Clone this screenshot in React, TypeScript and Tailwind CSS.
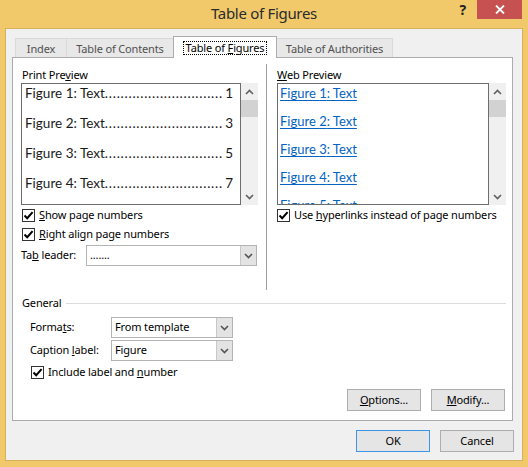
import { ReactNode } from 'react';

// Word "Table of Figures" dialog, Windows 8 chrome
function Check() {
  return (
    <div className="flex size-[13px] shrink-0 items-center justify-center border border-[#333333] bg-white">
      <svg width="11" height="11" viewBox="0 0 11 11">
        <path d="M1.5 5.5 L4.2 8.2 L9.6 2.2" fill="none" stroke="#000" strokeWidth="2" />
      </svg>
    </div>
  );
}

function Chevron({ up = false, color = '#606060' }: { up?: boolean; color?: string }) {
  return (
    <svg width="9" height="6" viewBox="0 0 9 6">
      <path
        d={up ? 'M1 5 L4.5 1.5 L8 5' : 'M1 1 L4.5 4.5 L8 1'}
        fill="none"
        stroke={color}
        strokeWidth="1.6"
      />
    </svg>
  );
}

function ScrollBar() {
  return (
    <div className="flex h-full w-[17px] flex-col bg-[#f0f0f0]">
      <div className="flex h-[17px] items-center justify-center">
        <Chevron up />
      </div>
      <div className="h-[17px] w-full bg-[#d2d2d2]" />
      <div className="flex-1" />
      <div className="flex h-[17px] items-center justify-center">
        <Chevron />
      </div>
    </div>
  );
}

function Combo({ value, width }: { value: string; width: string }) {
  return (
    <div className={`flex h-[21px] border border-[#b4b4b4] bg-white ${width}`}>
      <div className="flex flex-1 items-center pl-[3px]">{value}</div>
      <div className="flex w-[16px] items-center justify-center border-l border-[#c8c8c8] bg-[#e3e3e3]">
        <Chevron color="#555" />
      </div>
    </div>
  );
}

function Btn({ children, def = false }: { children: ReactNode; def?: boolean }) {
  return (
    <div
      className={`flex h-[22px] w-[74px] items-center justify-center border bg-[#e5e5e5] ${
        def ? 'border-[#3c95e6]' : 'border-[#adadad]'
      }`}
    >
      {children}
    </div>
  );
}

function CheckRow({ children }: { children: ReactNode }) {
  return (
    <div className="flex h-[17px] items-center gap-[4px]">
      <Check />
      <span>{children}</span>
    </div>
  );
}

const printRows = ['1', '3', '5', '7'];
const webRows = ['1', '2', '3', '4', '5'];

export default function App() {
  return (
    <div className="h-[467px] w-[528px] overflow-hidden bg-[#f1c96b] font-['Noto_Sans',sans-serif] text-[11px] tracking-[-0.15px] text-black">
      {/* title bar */}
      <div className="grid h-[28px] grid-cols-[1fr_auto_1fr] items-start">
        <div />
        <div className="pt-[3px] text-[15px] leading-[20px] tracking-[-0.3px] text-[#2b2b2b]">
          Table of Figures
        </div>
        <div className="flex justify-end">
          <div className="mr-[11px] pt-[1px] text-[14px] font-bold leading-[17px] text-[#222]">?</div>
          <div className="mr-[6px] flex h-[19px] w-[45px] items-center justify-center bg-[#c75050]">
            <svg width="10" height="9" viewBox="0 0 10 9">
              <path d="M1 0.5 L9 8.5 M9 0.5 L1 8.5" stroke="#fff" strokeWidth="1.8" />
            </svg>
          </div>
        </div>
      </div>

      {/* client area */}
      <div className="ml-[5px] h-[433px] w-[518px] border border-[#d6b15c] bg-[#f0f0f0]">
        <div className="pl-[6px] pt-[7px]">
          {/* tabs */}
          <div className="flex h-[21px] items-end pl-[3px] text-[#505050]">
            <div className="flex h-[19px] w-[52px] items-center justify-center border border-b-0 border-[#d9d9d9] bg-[#e8e8e8] pt-[2px]">
              Index
            </div>
            <div className="-ml-px flex h-[19px] w-[108px] items-center justify-center border border-b-0 border-[#d9d9d9] bg-[#e8e8e8] pt-[2px]">
              Table of Contents
            </div>
            <div className="relative z-10 -mb-px -ml-px flex h-[22px] w-[104px] items-center justify-center border border-b-0 border-[#acacac] bg-white pt-[1px] text-black">
              <span className="border border-dotted border-black px-[2px] leading-[12px]">
                Table of <u>F</u>igures
              </span>
            </div>
            <div className="-ml-px flex h-[19px] w-[117px] items-center justify-center border border-b-0 border-[#d9d9d9] bg-[#e8e8e8] pt-[2px]">
              Table of Authorities
            </div>
          </div>

          {/* tab panel */}
          <div className="flex h-[364px] w-[501px] flex-col border border-[#acacac] bg-white pt-[9px]">
            <div className="flex h-[223px] pl-[8px]">
              {/* print preview */}
              <div className="flex w-[237px] flex-col">
                <div className="h-[16px] pl-[1px] leading-[16px]">
                  Print Pre<u>v</u>iew
                </div>
                <div className="flex h-[122px]">
                  <div className="w-[220px] overflow-hidden border border-[#6d6d6d] pr-[7px] pl-[3px] font-['Lato',sans-serif] text-[13.5px] tracking-normal text-[#1a1a1a]">
                    <div className="flex flex-col gap-[12px]">
                      {printRows.map((n, i) => (
                        <div key={n} className="flex leading-[18px]">
                          <span className="whitespace-nowrap">Figure {i + 1}: Text</span>
                          <span className="whitespace-nowrap tracking-[0.75px]">{'.'.repeat(30)}</span>
                          <span className="ml-auto">{n}</span>
                        </div>
                      ))}
                    </div>
                  </div>
                  <ScrollBar />
                </div>
                <div className="mt-[2px] pl-[1px]">
                  <CheckRow>
                    <u>S</u>how page numbers
                  </CheckRow>
                </div>
                <div className="mt-[2px] pl-[1px]">
                  <CheckRow>
                    <u>R</u>ight align page numbers
                  </CheckRow>
                </div>
                <div className="mt-[2px] flex items-center">
                  <span className="w-[65px]">
                    Ta<u>b</u> leader:
                  </span>
                  <Combo value="......." width="w-[171px]" />
                </div>
              </div>

              {/* separator */}
              <div className="ml-[8px] -mt-[3px] h-[226px] w-px bg-[#a0a0a0]" />

              {/* web preview */}
              <div className="ml-[10px] flex w-[229px] flex-col">
                <div className="h-[16px] leading-[16px]">
                  <u>W</u>eb Preview
                </div>
                <div className="flex h-[122px]">
                  <div className="w-[212px] overflow-hidden border border-[#6d6d6d] pl-[2px] font-['Lato',sans-serif] text-[13px] tracking-normal text-[#0563c1]">
                    <div className="flex flex-col gap-[10px]">
                      {webRows.map((n) => (
                        <div key={n} className="leading-[18px]">
                          <span className="underline underline-offset-[2px]">Figure {n}: Text</span>
                        </div>
                      ))}
                    </div>
                  </div>
                  <ScrollBar />
                </div>
                <div className="mt-[2px]">
                  <CheckRow>
                    Use <u>h</u>yperlinks instead of page numbers
                  </CheckRow>
                </div>
              </div>
            </div>

            {/* general */}
            <div className="mt-[5px] flex h-[16px] items-center pl-[9px] pr-[6px]">
              <span>General</span>
              <div className="ml-[4px] h-px flex-1 bg-[#dcdcdc]" />
            </div>
            <div className="mt-[6px] flex items-center pl-[17px]">
              <span className="w-[81px]">
                Forma<u>t</u>s:
              </span>
              <Combo value="From template" width="w-[122px]" />
            </div>
            <div className="mt-[2px] flex items-center pl-[17px]">
              <span className="w-[81px]">
                Caption <u>l</u>abel:
              </span>
              <Combo value="Figure" width="w-[122px]" />
            </div>
            <div className="mt-[3px] pl-[18px]">
              <CheckRow>
                Include label and <u>n</u>umber
              </CheckRow>
            </div>
            <div className="mt-[8px] flex justify-end gap-[10px] pr-[7px]">
              <Btn>
                <u>O</u>ptions...
              </Btn>
              <Btn>
                <u>M</u>odify...
              </Btn>
            </div>
          </div>

          {/* dialog buttons */}
          <div className="mt-[9px] flex w-[510px] justify-end gap-[10px] pr-[8px]">
            <Btn def>OK</Btn>
            <Btn>Cancel</Btn>
          </div>
        </div>
      </div>
    </div>
  );
}
